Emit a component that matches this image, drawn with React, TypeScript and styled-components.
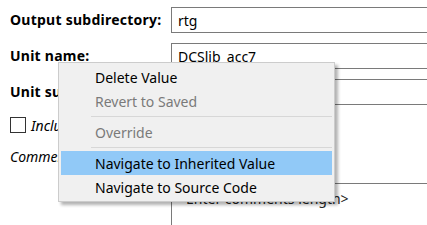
import React from "react";
import styled, { createGlobalStyle } from "styled-components";

const Global = createGlobalStyle`
  html, body {
    margin: 0;
    padding: 0;
    background: #ffffff;
    overflow: hidden;
  }
  body {
    font-family: "Noto Sans", "Open Sans", sans-serif;
    font-size: 14px;
    color: #000;
  }
`;

const Page = styled.div`
  position: relative;
  width: 427px;
  height: 225px;
  overflow: hidden;
`;

const Form = styled.div`
  display: grid;
  grid-template-columns: 161px 300px;
  grid-auto-rows: auto;
  row-gap: 10px;
  align-items: center;
  padding: 7px 0 0 10px;
`;

const Label = styled.div<{ $italic?: boolean }>`
  font-weight: ${(p) => (p.$italic ? 400 : 700)};
  font-style: ${(p) => (p.$italic ? "italic" : "normal")};
  letter-spacing: ${(p) => (p.$italic ? "0" : "0.25px")};
  white-space: nowrap;
  line-height: 24px;
`;

const Field = styled.div`
  box-sizing: border-box;
  height: 26px;
  border: 1px solid #7a7a7a;
  background: #fff;
  padding: 0 6px;
  display: flex;
  align-items: center;
  white-space: nowrap;
`;

const CheckRow = styled.label`
  grid-column: 1 / span 2;
  display: flex;
  align-items: center;
  gap: 5px;
  height: 20px;
  font-style: italic;
  white-space: nowrap;
`;

const Box = styled.span`
  box-sizing: border-box;
  width: 16px;
  height: 16px;
  border: 1px solid #333;
  background: #fff;
`;

const TextArea = styled.div`
  grid-column: 2;
  box-sizing: border-box;
  height: 60px;
  margin-top: 4px;
  border: 1px solid #7a7a7a;
  padding: 5px 6px;
  white-space: nowrap;
  color: #222;
`;

const Menu = styled.div`
  position: absolute;
  left: 58px;
  top: 62px;
  width: 277px;
  box-sizing: border-box;
  padding: 2px;
  background: #f0f0f0;
  border: 1px solid #cccccc;
  box-shadow: 3px 3px 3px rgba(0, 0, 0, 0.3);
`;

const Item = styled.div<{ $disabled?: boolean; $active?: boolean }>`
  height: 24px;
  display: flex;
  align-items: center;
  padding-left: 34px;
  white-space: nowrap;
  color: ${(p) => (p.$disabled ? "#7a7a7a" : "#000")};
  background: ${(p) => (p.$active ? "#91c9f7" : "transparent")};
`;

const Separator = styled.div`
  height: 7px;
  display: flex;
  align-items: center;
  padding-left: 30px;
  &::after {
    content: "";
    flex: 1;
    height: 1px;
    background: #d7d7d7;
  }
`;

export default function App() {
  return (
    <>
      <Global />
      <Page>
        <Form>
          <Label>Output subdirectory:</Label>
          <Field>rtg</Field>
          <Label>Unit name:</Label>
          <Field>DCSlib_acc7</Field>
          <Label>Unit subdirectory:</Label>
          <Field />
          <CheckRow>
            <Box />
            Include unit subdirectory in library path
          </CheckRow>
          <Label $italic>Comment:</Label>
          <div />
          <TextArea>&lt;Enter comments length&gt;</TextArea>
        </Form>
        <Menu>
          <Item>Delete Value</Item>
          <Item $disabled>Revert to Saved</Item>
          <Separator />
          <Item $disabled>Override</Item>
          <Separator />
          <Item $active>Navigate to Inherited Value</Item>
          <Item>Navigate to Source Code</Item>
        </Menu>
      </Page>
    </>
  );
}
